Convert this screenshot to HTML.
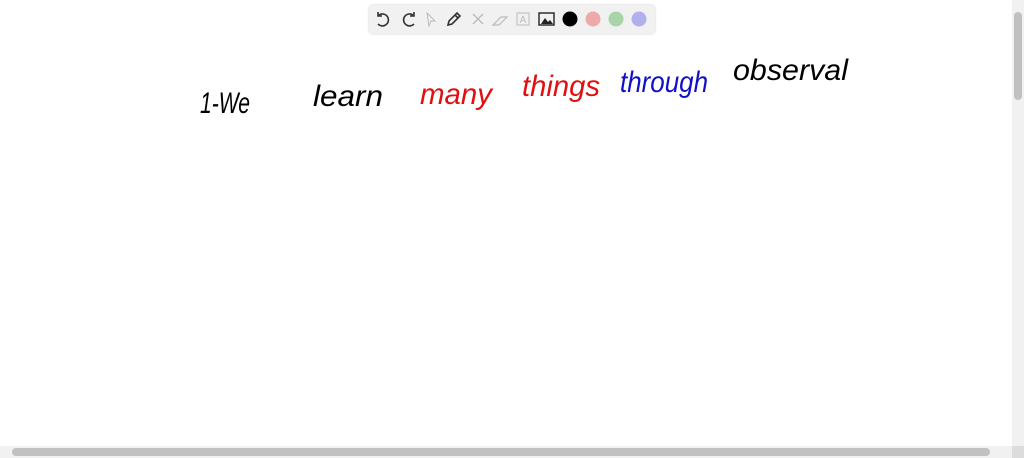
<!DOCTYPE html>
<html><head><style>
body{margin:0;width:1024px;height:458px;background:#fff;overflow:hidden;position:relative;font-family:"Liberation Sans",sans-serif}
.tb{position:absolute;left:369px;top:5px;width:286px;height:29px;background:#f1f1f1;border-radius:4px;box-shadow:0 0 2px #ccc}
.vs{position:absolute;right:0;top:0;width:12px;height:446px;background:#f1f1f1}
.vt{position:absolute;right:2px;top:12px;width:8px;height:88px;background:#c1c1c1;border-radius:4px}
.hs{position:absolute;left:0;bottom:0;width:1012px;height:12px;background:#f1f1f1}
.ht{position:absolute;left:12px;bottom:2px;width:978px;height:8px;background:#c1c1c1;border-radius:4px}
.c{position:absolute;bottom:0;right:0;width:12px;height:12px;background:#dcdcdc}
</style></head><body>
<div class="tb">
<svg width="286" height="29" viewBox="0 0 286 29">
<g fill="none" stroke="#333" stroke-width="1.6">
<path d="M10 10 A6 6 0 1 1 9 19 M9 7 V11 H13"/>
<path d="M44 10 A6 6 0 1 0 45 19 M45 7 V11 H41"/>
<path d="M58 8 L66 16 L62 16 L60 21 Z" stroke="#bbb" stroke-width="1"/>
<path d="M79 20 L80 16 L88 8 L91 11 L83 19 Z M86 10 L89 13"/>
<path d="M104 9 L114 19 M114 9 L104 19" stroke="#bbb" stroke-width="1.4"/>
<path d="M124 20 L132 12 L138 12 L130 20 Z" stroke="#bbb" stroke-width="1.2"/>
<rect x="148" y="8" width="12" height="12" stroke="#bbb" stroke-width="1"/>
<rect x="170" y="8" width="15" height="12" stroke="#222" stroke-width="1.4"/>
</g>
<text x="154" y="18" font-size="10" fill="#bbb" text-anchor="middle">A</text>
<path d="M172 19 L176 13 L179 17 L181 15 L184 19 Z" fill="#222"/>
<circle cx="201" cy="14" r="7.5" fill="#000"/>
<circle cx="224" cy="14" r="7.5" fill="#eeaaaa"/>
<circle cx="247" cy="14" r="7.5" fill="#a8d4a8"/>
<circle cx="270" cy="14" r="7.5" fill="#b0b0ec"/>
</svg></div>
<svg width="1012" height="446" style="position:absolute;left:0;top:0" font-family="Liberation Sans" font-style="italic" font-size="30">
<text x="200" y="113" textLength="50" lengthAdjust="spacingAndGlyphs">1-We</text>
<text x="313" y="106" textLength="70" lengthAdjust="spacingAndGlyphs">learn</text>
<text x="420" y="104" textLength="72" lengthAdjust="spacingAndGlyphs" fill="#e01010">many</text>
<text x="522" y="96" textLength="78" lengthAdjust="spacingAndGlyphs" fill="#e01010">things</text>
<text x="620" y="92" textLength="88" lengthAdjust="spacingAndGlyphs" fill="#1010c8">through</text>
<text x="733" y="80" textLength="115" lengthAdjust="spacingAndGlyphs">observal</text>
</svg>
<div class="vs"><div class="vt"></div></div>
<div class="hs"><div class="ht"></div></div>
<div class="c"></div>
</body></html>
